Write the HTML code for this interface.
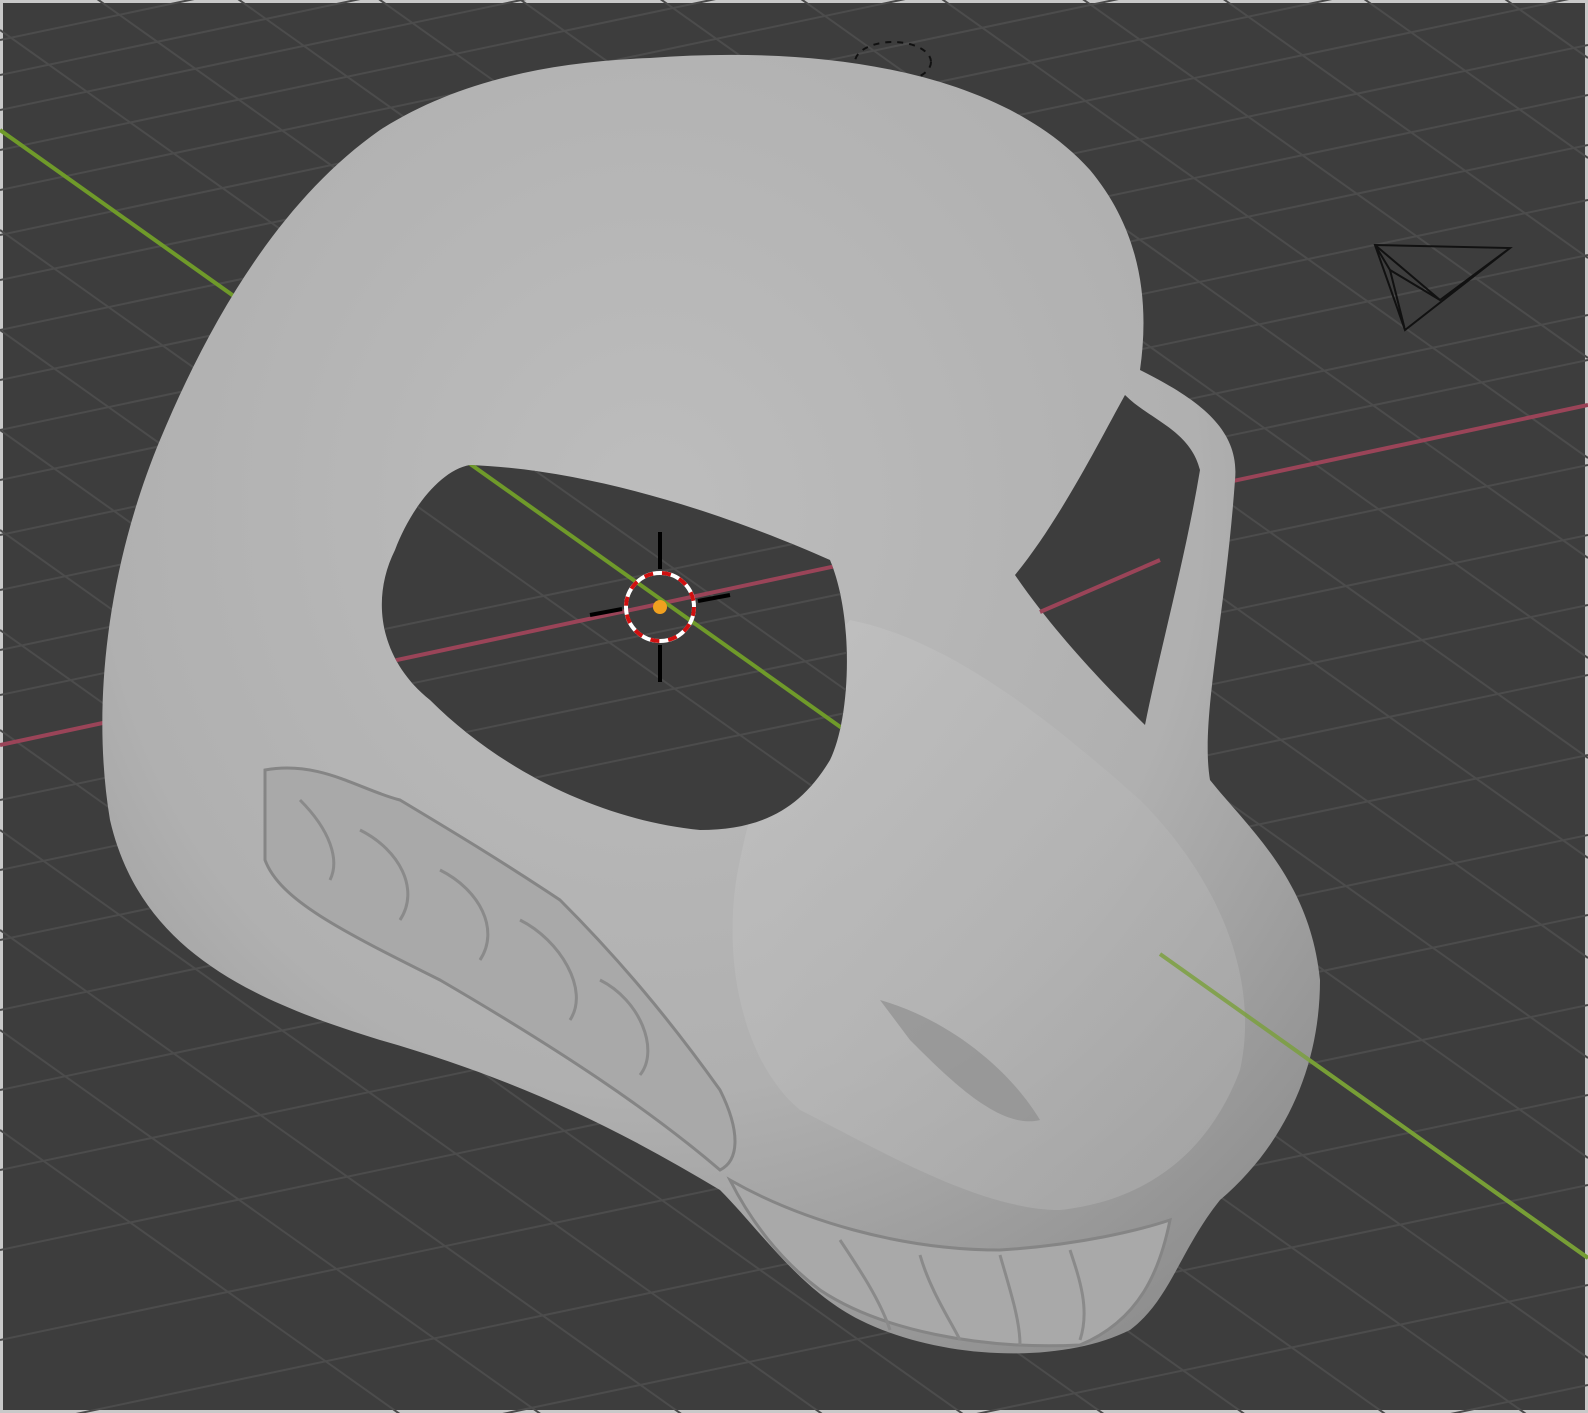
<!DOCTYPE html>
<html><head><meta charset="utf-8"><style>
html,body{margin:0;padding:0;background:#c9c9c9;width:1588px;height:1413px;overflow:hidden}
svg{display:block}
</style></head><body>
<svg width="1588" height="1413" viewBox="0 0 1588 1413" xmlns="http://www.w3.org/2000/svg">
<defs>
<radialGradient id="mg" cx="0.45" cy="0.35" r="0.75">
<stop offset="0" stop-color="#bdbdbd"/><stop offset="0.6" stop-color="#b0b0b0"/><stop offset="1" stop-color="#8e8e8e"/>
</radialGradient>
<linearGradient id="sn" x1="0" y1="0" x2="1" y2="1">
<stop offset="0" stop-color="#c4c4c4"/><stop offset="1" stop-color="#a8a8a8"/>
</linearGradient>
<clipPath id="eye"><path d="M470 465 C600 470 740 520 830 560 C855 620 850 720 830 760 C800 810 760 830 700 830 C600 820 500 770 430 700 C380 660 370 600 395 550 C410 510 440 470 470 465 Z"/></clipPath>
</defs>
<rect x="3" y="3" width="1582" height="1407" fill="#3d3d3d"/>
<g stroke="#4c4c4c" stroke-width="2">
<line x1="0" y1="40" x2="1588" y2="-295"/><line x1="0" y1="75" x2="1588" y2="-260"/><line x1="0" y1="110" x2="1588" y2="-225"/><line x1="0" y1="150" x2="1588" y2="-185"/><line x1="0" y1="190" x2="1588" y2="-145"/><line x1="0" y1="235" x2="1588" y2="-100"/><line x1="0" y1="280" x2="1588" y2="-55"/><line x1="0" y1="330" x2="1588" y2="-5"/><line x1="0" y1="380" x2="1588" y2="45"/><line x1="0" y1="430" x2="1588" y2="95"/><line x1="0" y1="480" x2="1588" y2="145"/><line x1="0" y1="535" x2="1588" y2="200"/><line x1="0" y1="590" x2="1588" y2="255"/><line x1="0" y1="650" x2="1588" y2="315"/><line x1="0" y1="695" x2="1588" y2="360"/><line x1="0" y1="800" x2="1588" y2="465"/><line x1="0" y1="870" x2="1588" y2="535"/><line x1="0" y1="940" x2="1588" y2="605"/><line x1="0" y1="1010" x2="1588" y2="675"/><line x1="0" y1="1090" x2="1588" y2="755"/><line x1="0" y1="1170" x2="1588" y2="835"/><line x1="0" y1="1250" x2="1588" y2="915"/><line x1="0" y1="1340" x2="1588" y2="1005"/><line x1="0" y1="1430" x2="1588" y2="1095"/><line x1="0" y1="1520" x2="1588" y2="1185"/><line x1="0" y1="1620" x2="1588" y2="1285"/><line x1="0" y1="1720" x2="1588" y2="1385"/><line x1="0" y1="1830" x2="1588" y2="1495"/>
<line x1="0" y1="-1470" x2="1588" y2="-342"/><line x1="0" y1="-1370" x2="1588" y2="-242"/><line x1="0" y1="-1270" x2="1588" y2="-142"/><line x1="0" y1="-1170" x2="1588" y2="-42"/><line x1="0" y1="-1070" x2="1588" y2="58"/><line x1="0" y1="-970" x2="1588" y2="158"/><line x1="0" y1="-870" x2="1588" y2="258"/><line x1="0" y1="-770" x2="1588" y2="358"/><line x1="0" y1="-670" x2="1588" y2="458"/><line x1="0" y1="-570" x2="1588" y2="558"/><line x1="0" y1="-470" x2="1588" y2="658"/><line x1="0" y1="-370" x2="1588" y2="758"/><line x1="0" y1="-270" x2="1588" y2="858"/><line x1="0" y1="-170" x2="1588" y2="958"/><line x1="0" y1="-70" x2="1588" y2="1058"/><line x1="0" y1="30" x2="1588" y2="1158"/><line x1="0" y1="230" x2="1588" y2="1358"/><line x1="0" y1="330" x2="1588" y2="1458"/><line x1="0" y1="430" x2="1588" y2="1558"/><line x1="0" y1="530" x2="1588" y2="1658"/><line x1="0" y1="630" x2="1588" y2="1758"/><line x1="0" y1="730" x2="1588" y2="1858"/><line x1="0" y1="830" x2="1588" y2="1958"/><line x1="0" y1="930" x2="1588" y2="2058"/><line x1="0" y1="1030" x2="1588" y2="2158"/><line x1="0" y1="1130" x2="1588" y2="2258"/>
</g>
<line x1="0" y1="745" x2="1588" y2="405" stroke="#9a4458" stroke-width="4"/>
<line x1="0" y1="130" x2="1588" y2="1258" stroke="#6f9a2a" stroke-width="4"/>
<g stroke="#111" stroke-width="2" fill="none">
<path d="M1375 245 L1510 248 L1405 330 Z M1375 245 L1440 300 L1510 248 M1390 270 L1405 330 M1375 245 L1390 270 L1440 300"/>
<ellipse cx="893" cy="62" rx="38" ry="20" stroke-dasharray="6 6"/>
</g>
<path d="M650 58 C820 45 1000 70 1090 170 C1140 230 1150 300 1140 370 C1200 400 1240 430 1235 480 C1225 620 1200 720 1210 780 C1250 830 1310 880 1320 980 C1320 1060 1290 1140 1220 1200 C1180 1250 1170 1300 1130 1330 C1060 1365 940 1360 860 1320 C800 1290 760 1230 720 1190 C620 1130 520 1080 380 1040 C250 1000 140 950 110 820 C90 700 110 560 160 440 C210 320 280 200 380 130 C450 85 540 62 650 58 Z" fill="url(#mg)"/>
<path d="M850 620 C950 640 1050 720 1140 800 C1220 880 1260 980 1240 1070 C1210 1150 1150 1200 1060 1210 C980 1210 880 1150 800 1110 C740 1060 720 950 740 860 C760 760 800 680 850 620 Z" fill="url(#sn)" opacity="0.7"/>
<path d="M880 1000 C950 1020 1010 1070 1040 1120 C1000 1130 950 1080 910 1040 Z" fill="#8e8e8e" opacity="0.7"/>
<path d="M1015 575 C1060 520 1100 440 1125 395 C1150 420 1190 430 1200 470 C1185 560 1160 650 1145 725 C1110 690 1060 640 1015 575 Z" fill="#3d3d3d"/>
<line x1="1040" y1="612" x2="1160" y2="560" stroke="#9a4458" stroke-width="4"/>
<path d="M470 465 C600 470 740 520 830 560 C855 620 850 720 830 760 C800 810 760 830 700 830 C600 820 500 770 430 700 C380 660 370 600 395 550 C410 510 440 470 470 465 Z" fill="#3d3d3d"/>
<g clip-path="url(#eye)">
<g stroke="#4c4c4c" stroke-width="2">
<line x1="380" y1="630" x2="860" y2="530"/><line x1="380" y1="690" x2="860" y2="590"/><line x1="380" y1="750" x2="860" y2="650"/><line x1="380" y1="810" x2="860" y2="710"/>
<line x1="380" y1="480" x2="860" y2="820"/><line x1="520" y1="460" x2="860" y2="700"/>
</g>
<line x1="0" y1="745" x2="1588" y2="405" stroke="#9a4458" stroke-width="4"/>
<line x1="0" y1="130" x2="1588" y2="1258" stroke="#6f9a2a" stroke-width="4"/>
</g>
<g fill="#a9a9a9" stroke="#858585" stroke-width="3">
<path d="M265 770 C320 760 360 790 400 800 C450 830 500 860 560 900 C620 960 670 1020 720 1090 C740 1130 740 1160 720 1170 C650 1110 560 1050 440 980 C340 930 280 900 265 860 Z"/>
<path d="M730 1180 C800 1220 900 1250 1000 1250 C1080 1245 1140 1230 1170 1220 C1160 1270 1140 1320 1080 1345 C980 1350 880 1330 820 1290 C780 1260 750 1220 730 1180 Z"/>
</g>
<g fill="none" stroke="#8a8a8a" stroke-width="3">
<path d="M300 800 C330 830 340 860 330 880 M360 830 C400 850 420 890 400 920 M440 870 C480 890 500 930 480 960 M520 920 C560 940 590 990 570 1020 M600 980 C640 1000 660 1050 640 1075"/>
<path d="M840 1240 C860 1270 880 1300 890 1330 M920 1255 C930 1290 950 1320 960 1340 M1000 1255 C1010 1290 1020 1320 1020 1345 M1070 1250 C1080 1280 1090 1310 1080 1340"/>
</g>
<line x1="1160" y1="954" x2="1588" y2="1258" stroke="#7aa03a" stroke-width="4" opacity="0.8"/>
<g transform="translate(660,607)">
<line x1="0" y1="-75" x2="0" y2="-38" stroke="#000" stroke-width="4"/>
<line x1="0" y1="38" x2="0" y2="75" stroke="#000" stroke-width="4"/>
<line x1="-70" y1="8" x2="-38" y2="2" stroke="#000" stroke-width="4"/>
<line x1="38" y1="-6" x2="70" y2="-12" stroke="#000" stroke-width="4"/>
<circle r="34" fill="none" stroke="#fff" stroke-width="4"/>
<circle r="34" fill="none" stroke="#d01010" stroke-width="4" stroke-dasharray="9 9"/>
<circle r="7" fill="#f0a020"/>
</g>
</svg>
</body></html>
